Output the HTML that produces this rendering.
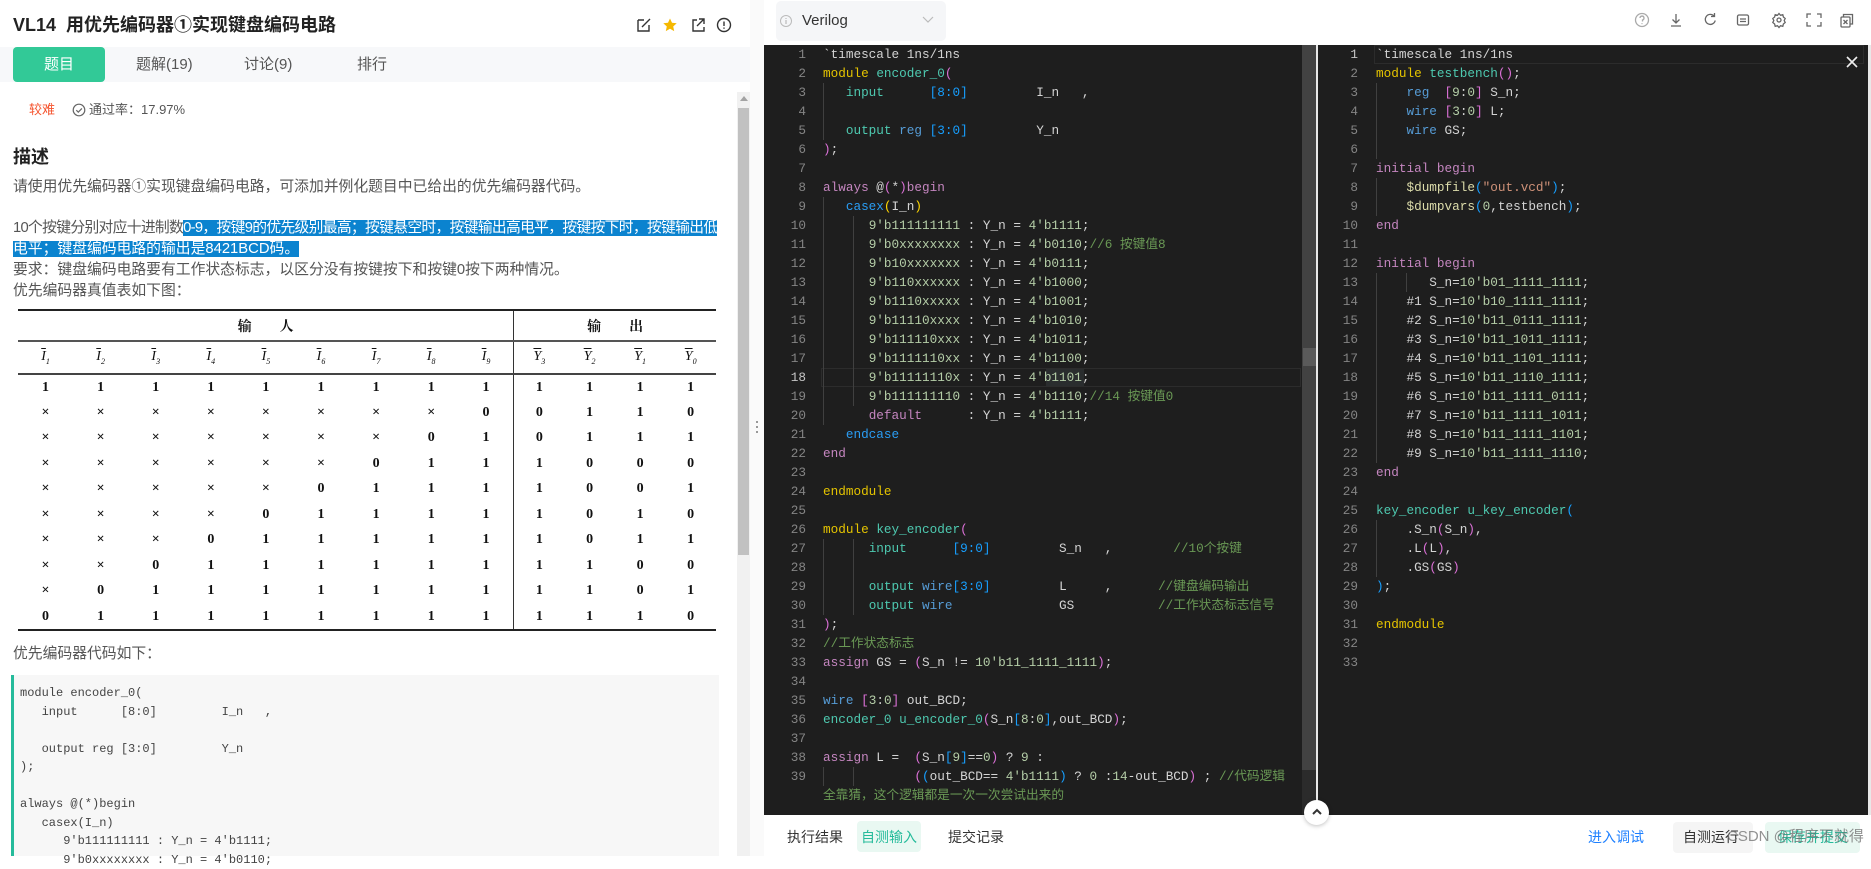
<!DOCTYPE html>
<html><head><meta charset="utf-8">
<style>
*{margin:0;padding:0;box-sizing:border-box}
body{width:1871px;height:856px;overflow:hidden;background:#fff;position:relative;font-family:"Liberation Sans","Noto Sans CJK SC",sans-serif;color:#333}
.a{position:absolute;white-space:pre}
.cn{font-family:"Liberation Sans","Noto Sans CJK SC",sans-serif}
.code{font-family:"Liberation Mono","Noto Sans CJK SC",monospace;font-size:12.7px;line-height:19px;color:#d4d4d4}
.ln{position:absolute;white-space:pre;width:40px;text-align:right;color:#858585;font-family:"Liberation Mono",monospace;font-size:12.7px;line-height:19px}
.y{color:#e5c400}.t{color:#4ec9b0}.b{color:#569cd6}.k{color:#2a9df4}.p{color:#c586c0}.n{color:#b5cea8}.c{color:#6a9955}.br{color:#179fff}.pk{color:#da70d6}.g{color:#ffd700}.f{color:#dcdcaa}.s{color:#ce9178}
.guide{position:absolute;width:1px;background:#404040}
table.tt{position:absolute;left:18px;top:309px;width:698px;border-collapse:collapse;font-family:"Liberation Serif",serif;font-weight:bold;font-size:14px;color:#111}
table.tt td{text-align:center;padding:0}
.hl{background:#0b83cf;color:#fff}
.para{font-size:14.8px;color:#555;line-height:21px}
</style></head><body>

<div class="a cn" style="left:13px;top:12px;font-size:18px;font-weight:bold;color:#222;line-height:26px">VL14  用优先编码器①实现键盘编码电路</div>
<svg class="a" style="left:636px;top:17px" width="100" height="16" viewBox="0 0 100 16">
 <g fill="none" stroke="#333" stroke-width="1.4">
  <path d="M2 3h6M2 3v11h11v-6M6 10l8-8"/>
  <path d="M61 3h-4v11h11v-4M63 2h5v5M68 2l-7 7"/>
  <circle cx="88" cy="8" r="6.5"/><path d="M88 4.5v4.5M88 10.5v1.2"/>
 </g>
 <path d="M34 1.5l2 4.3 4.7.5-3.5 3.2 1 4.6-4.2-2.4-4.2 2.4 1-4.6-3.5-3.2 4.7-.5z" fill="#f5b800"/>
</svg>
<div class="a" style="left:0;top:47px;width:750px;height:35px;background:#f7f8fa"></div>
<div class="a" style="left:13px;top:47px;width:92px;height:35px;background:#32c997;border-radius:4px"></div>
<div class="a cn" style="left:13px;top:47px;width:92px;text-align:center;line-height:35px;font-size:15px;color:#fff">题目</div>
<div class="a cn" style="left:136px;top:47px;line-height:35px;font-size:15px;color:#555">题解(19)</div>
<div class="a cn" style="left:244px;top:47px;line-height:35px;font-size:15px;color:#555">讨论(9)</div>
<div class="a cn" style="left:357px;top:47px;line-height:35px;font-size:15px;color:#555">排行</div>

<div class="a cn" style="left:29px;top:101px;font-size:13px;color:#f5532d;line-height:18px">较难</div>
<svg class="a" style="left:72px;top:103px" width="14" height="14"><circle cx="7" cy="7" r="5.8" fill="none" stroke="#666" stroke-width="1.2"/><path d="M4.3 7.2l2 2 3.6-3.8" fill="none" stroke="#666" stroke-width="1.2"/></svg>
<div class="a cn" style="left:89px;top:101px;font-size:13px;color:#555;line-height:18px">通过率：17.97%</div>

<div class="a cn" style="left:13px;top:145px;font-size:18px;font-weight:bold;color:#222;line-height:24px">描述</div>
<div class="a cn para" style="left:13px;top:177px">请使用优先编码器①实现键盘编码电路，可添加并例化题目中已给出的优先编码器代码。</div>
<div class="a cn para" style="left:13px;top:218px;letter-spacing:-0.7px">10个按键分别对应十进制数<span class="hl">0-9，按键9的优先级别最高；按键悬空时，按键输出高电平，按键按下时，按键输出低</span></div>
<div class="a cn para" style="left:13px;top:239px"><span class="hl">电平；键盘编码电路的输出是8421BCD码。</span></div>
<div class="a cn para" style="left:13px;top:260px">要求：键盘编码电路要有工作状态标志，以区分没有按键按下和按键0按下两种情况。</div>
<div class="a cn para" style="left:13px;top:281px">优先编码器真值表如下图：</div>

<table class="tt">
<colgroup><col span="9" style="width:55.1px"><col span="4" style="width:50.5px"></colgroup>
<tr style="height:31px;border-top:2px solid #222;border-bottom:2px solid #555"><td colspan="9" style="font-family:'Noto Serif CJK SC',serif;font-size:14px">输&emsp;&emsp;人</td><td colspan="4" style="border-left:1.5px solid #333;font-family:'Noto Serif CJK SC',serif;font-size:14px">输&emsp;&emsp;出</td></tr>
<tr style="height:33px;border-bottom:2px solid #444;font-style:italic;font-weight:normal"><td><span style="text-decoration:overline">I</span><sub style="font-size:8px">1</sub></td><td><span style="text-decoration:overline">I</span><sub style="font-size:8px">2</sub></td><td><span style="text-decoration:overline">I</span><sub style="font-size:8px">3</sub></td><td><span style="text-decoration:overline">I</span><sub style="font-size:8px">4</sub></td><td><span style="text-decoration:overline">I</span><sub style="font-size:8px">5</sub></td><td><span style="text-decoration:overline">I</span><sub style="font-size:8px">6</sub></td><td><span style="text-decoration:overline">I</span><sub style="font-size:8px">7</sub></td><td><span style="text-decoration:overline">I</span><sub style="font-size:8px">8</sub></td><td><span style="text-decoration:overline">I</span><sub style="font-size:8px">9</sub></td><td style="border-left:1.5px solid #333"><span style="text-decoration:overline">Y</span><sub style="font-size:8px">3</sub></td><td><span style="text-decoration:overline">Y</span><sub style="font-size:8px">2</sub></td><td><span style="text-decoration:overline">Y</span><sub style="font-size:8px">1</sub></td><td><span style="text-decoration:overline">Y</span><sub style="font-size:8px">0</sub></td></tr>
<tr style="height:26px"><td>1</td><td>1</td><td>1</td><td>1</td><td>1</td><td>1</td><td>1</td><td>1</td><td>1</td><td style="border-left:1.5px solid #333">1</td><td>1</td><td>1</td><td>1</td></tr>
<tr style="height:25.5px"><td>×</td><td>×</td><td>×</td><td>×</td><td>×</td><td>×</td><td>×</td><td>×</td><td>0</td><td style="border-left:1.5px solid #333">0</td><td>1</td><td>1</td><td>0</td></tr>
<tr style="height:25.5px"><td>×</td><td>×</td><td>×</td><td>×</td><td>×</td><td>×</td><td>×</td><td>0</td><td>1</td><td style="border-left:1.5px solid #333">0</td><td>1</td><td>1</td><td>1</td></tr>
<tr style="height:25.5px"><td>×</td><td>×</td><td>×</td><td>×</td><td>×</td><td>×</td><td>0</td><td>1</td><td>1</td><td style="border-left:1.5px solid #333">1</td><td>0</td><td>0</td><td>0</td></tr>
<tr style="height:25.5px"><td>×</td><td>×</td><td>×</td><td>×</td><td>×</td><td>0</td><td>1</td><td>1</td><td>1</td><td style="border-left:1.5px solid #333">1</td><td>0</td><td>0</td><td>1</td></tr>
<tr style="height:25.5px"><td>×</td><td>×</td><td>×</td><td>×</td><td>0</td><td>1</td><td>1</td><td>1</td><td>1</td><td style="border-left:1.5px solid #333">1</td><td>0</td><td>1</td><td>0</td></tr>
<tr style="height:25.5px"><td>×</td><td>×</td><td>×</td><td>0</td><td>1</td><td>1</td><td>1</td><td>1</td><td>1</td><td style="border-left:1.5px solid #333">1</td><td>0</td><td>1</td><td>1</td></tr>
<tr style="height:25.5px"><td>×</td><td>×</td><td>0</td><td>1</td><td>1</td><td>1</td><td>1</td><td>1</td><td>1</td><td style="border-left:1.5px solid #333">1</td><td>1</td><td>0</td><td>0</td></tr>
<tr style="height:25.5px"><td>×</td><td>0</td><td>1</td><td>1</td><td>1</td><td>1</td><td>1</td><td>1</td><td>1</td><td style="border-left:1.5px solid #333">1</td><td>1</td><td>0</td><td>1</td></tr>
<tr style="height:26px;border-bottom:2px solid #222"><td>0</td><td>1</td><td>1</td><td>1</td><td>1</td><td>1</td><td>1</td><td>1</td><td>1</td><td style="border-left:1.5px solid #333">1</td><td>1</td><td>1</td><td>0</td></tr>
</table>

<div class="a cn para" style="left:13px;top:644px">优先编码器代码如下：</div>
<div class="a" style="left:11px;top:675px;width:708px;height:181px;background:#f7f7f7;border-left:3px solid #25bb9b"></div>
<div class="a" style="left:20px;top:684px;font-family:'Liberation Mono',monospace;font-size:12px;line-height:18.5px;color:#444">module encoder_0(
   input      [8:0]         I_n   ,

   output reg [3:0]         Y_n
);

always @(*)begin
   casex(I_n)
      9'b111111111 : Y_n = 4'b1111;
      9'b0xxxxxxxx : Y_n = 4'b0110;</div>

<div class="a" style="left:737px;top:92px;width:13px;height:764px;background:#f1f1f1"></div>
<div class="a" style="left:740px;top:96px;width:0;height:0;border-left:4px solid transparent;border-right:4px solid transparent;border-bottom:5px solid #a3a3a3"></div>
<div class="a" style="left:738px;top:108px;width:11px;height:447px;background:#c1c1c1"></div>
<div class="a" style="left:750px;top:0;width:14px;height:856px;background:#fafafa"></div>
<div class="a" style="left:756px;top:421px;width:2px;height:2px;background:#999;box-shadow:0 5px #999,0 10px #999"></div>

<div class="a" style="left:776px;top:1px;width:170px;height:40px;background:#f5f6f8;border-radius:5px"></div>
<svg class="a" style="left:779px;top:14px" width="14" height="14"><circle cx="7" cy="7" r="5.5" fill="none" stroke="#bbb" stroke-width="1"/><path d="M7 6v4M7 4v1" stroke="#bbb" stroke-width="1.2"/></svg>
<div class="a" style="left:802px;top:10px;font-size:15px;color:#333;line-height:22px">Verilog</div>
<svg class="a" style="left:922px;top:16px" width="12" height="8"><path d="M1 1l5 5 5-5" fill="none" stroke="#bbb" stroke-width="1.2"/></svg>

<svg class="a" style="left:1630px;top:10px" width="230" height="22" viewBox="0 0 230 22">
 <g fill="none" stroke="#666" stroke-width="1.3">
  <circle cx="12" cy="10" r="6.5" stroke="#aaa"/><path d="M10 8a2 2 0 1 1 2.5 2v1.5M12 13.3v.8" stroke="#aaa"/>
  <path d="M46 4v9M42.5 9.5l3.5 3.5 3.5-3.5M41 16h10"/>
  <path d="M84 6a5 5 0 1 0 1.2 4.5M84.5 3v3.5h-3.5"/>
  <rect x="107.5" y="5" width="11" height="10" rx="1.5"/><path d="M110 9h6M110 11.5h6"/>
  <circle cx="149" cy="10" r="2"/><path d="M149 3.5l1.5 1.8 2.3-.6.6 2.3 1.8 1.5-1 2 1 2-1.8 1.5-.6 2.3-2.3-.6-1.5 1.8-1.5-1.8-2.3.6-.6-2.3-1.8-1.5 1-2-1-2 1.8-1.5.6-2.3 2.3.6z"/>
  <path d="M177 8V4h4M187 4h4v4M191 12v4h-4M181 16h-4v-4"/>
  <rect x="211" y="7" width="9" height="10" rx="1"/><path d="M213.5 7V4.5h9v9.5H220M213.5 10l4 4M217.5 10l-4 4"/>
 </g>
</svg>

<div class="a" style="left:764px;top:45px;width:1107px;height:770px;background:#1e1e1e"></div>
<div class="a" style="left:1302px;top:45px;width:14px;height:725px;background:#424242"></div>
<div class="a" style="left:1302px;top:770px;width:14px;height:45px;background:#2b2b2b"></div>
<div class="a" style="left:1303px;top:348px;width:13px;height:18px;background:#5a5a5a"></div>
<div class="a" style="left:1316px;top:45px;width:2px;height:770px;background:#e8e8e8"></div>
<div class="a" style="left:1868px;top:45px;width:3px;height:770px;background:#e8e8e8"></div>
<div class="a" style="left:821px;top:368px;width:480px;height:19px;border:1px solid #2c2c2c"></div>
<div class="a" style="left:1374px;top:45px;width:490px;height:19px;border:1px solid #2c2c2c"></div>
<div class="a" style="left:1046px;top:369px;width:38px;height:17px;background:#2a2d2e"></div>

<div class="guide" style="left:823px;top:83px;height:57px"></div>
<div class="guide" style="left:823px;top:197px;height:228px"></div>
<div class="guide" style="left:853px;top:216px;height:190px"></div>
<div class="guide" style="left:823px;top:539px;height:76px"></div>
<div class="guide" style="left:853px;top:539px;height:76px"></div>
<div class="guide" style="left:823px;top:767px;height:19px"></div>
<div class="guide" style="left:853px;top:767px;height:19px"></div>
<div class="guide" style="left:1376px;top:83px;height:76px"></div>
<div class="guide" style="left:1376px;top:178px;height:38px"></div>
<div class="guide" style="left:1376px;top:273px;height:190px"></div>
<div class="guide" style="left:1406px;top:273px;height:19px"></div>
<div class="guide" style="left:1376px;top:520px;height:57px"></div>

<div class="ln" style="left:766px;top:45px">1
2
3
4
5
6
7
8
9
10
11
12
13
14
15
16
17
<span style="color:#c6c6c6">18</span>
19
20
21
22
23
24
25
26
27
28
29
30
31
32
33
34
35
36
37
38
39</div>

<div class="a code" style="left:823px;top:45px">`timescale 1ns/1ns
<span class="y">module</span> <span class="t">encoder_0</span><span class="pk">(</span>
   <span class="t">input</span>      <span class="br">[8:0]</span>         I_n   ,

   <span class="t">output</span> <span class="b">reg</span> <span class="br">[3:0]</span>         Y_n
<span class="pk">)</span>;

<span class="p">always</span> @<span class="pk">(</span>*<span class="pk">)</span><span class="p">begin</span>
   <span class="k">casex</span><span class="g">(</span>I_n<span class="g">)</span>
      <span class="n">9'b111111111</span> : Y_n = <span class="n">4'b1111</span>;
      <span class="n">9'b0xxxxxxxx</span> : Y_n = <span class="n">4'b0110</span>;<span class="c">//6 按键值8</span>
      <span class="n">9'b10xxxxxxx</span> : Y_n = <span class="n">4'b0111</span>;
      <span class="n">9'b110xxxxxx</span> : Y_n = <span class="n">4'b1000</span>;
      <span class="n">9'b1110xxxxx</span> : Y_n = <span class="n">4'b1001</span>;
      <span class="n">9'b11110xxxx</span> : Y_n = <span class="n">4'b1010</span>;
      <span class="n">9'b111110xxx</span> : Y_n = <span class="n">4'b1011</span>;
      <span class="n">9'b1111110xx</span> : Y_n = <span class="n">4'b1100</span>;
      <span class="n">9'b11111110x</span> : Y_n = <span class="n">4'b1101</span>;
      <span class="n">9'b111111110</span> : Y_n = <span class="n">4'b1110</span>;<span class="c">//14 按键值0</span>
      <span class="p">default</span>      : Y_n = <span class="n">4'b1111</span>;
   <span class="k">endcase</span>
<span class="p">end</span>

<span class="y">endmodule</span>

<span class="y">module</span> <span class="t">key_encoder</span><span class="pk">(</span>
      <span class="t">input</span>      <span class="br">[9:0]</span>         S_n   ,        <span class="c">//10个按键</span>

      <span class="t">output</span> <span class="b">wire</span><span class="br">[3:0]</span>         L     ,      <span class="c">//键盘编码输出</span>
      <span class="t">output</span> <span class="b">wire</span>              GS           <span class="c">//工作状态标志信号</span>
<span class="pk">)</span>;
<span class="c">//工作状态标志</span>
<span class="p">assign</span> GS = <span class="pk">(</span>S_n != <span class="n">10'b11_1111_1111</span><span class="pk">)</span>;

<span class="b">wire</span> <span class="pk">[</span><span class="n">3</span>:<span class="n">0</span><span class="pk">]</span> out_BCD;
<span class="t">encoder_0</span> <span class="t">u_encoder_0</span><span class="pk">(</span>S_n<span class="br">[</span><span class="n">8</span>:<span class="n">0</span><span class="br">]</span>,out_BCD<span class="pk">)</span>;

<span class="p">assign</span> L =  <span class="pk">(</span>S_n<span class="br">[</span><span class="n">9</span><span class="br">]</span>==<span class="n">0</span><span class="pk">)</span> ? <span class="n">9</span> :
            <span class="pk">(</span><span class="br">(</span>out_BCD== <span class="n">4'b1111</span><span class="br">)</span> ? <span class="n">0</span> :<span class="n">14</span>-out_BCD<span class="pk">)</span> ; <span class="c">//代码逻辑</span>
<span class="c">全靠猜，这个逻辑都是一次一次尝试出来的</span></div>

<div class="ln" style="left:1318px;top:45px"><span style="color:#c6c6c6">1</span>
2
3
4
5
6
7
8
9
10
11
12
13
14
15
16
17
18
19
20
21
22
23
24
25
26
27
28
29
30
31
32
33</div>

<div class="a code" style="left:1376px;top:45px">`timescale 1ns/1ns
<span class="y">module</span> <span class="t">testbench</span><span class="pk">()</span>;
    <span class="b">reg</span>  <span class="pk">[</span><span class="n">9</span>:<span class="n">0</span><span class="pk">]</span> S_n;
    <span class="b">wire</span> <span class="pk">[</span><span class="n">3</span>:<span class="n">0</span><span class="pk">]</span> L;
    <span class="b">wire</span> GS;

<span class="p">initial</span> <span class="p">begin</span>
    <span class="f">$dumpfile</span><span class="br">(</span><span class="s">"out.vcd"</span><span class="br">)</span>;
    <span class="f">$dumpvars</span><span class="br">(</span><span class="n">0</span>,testbench<span class="br">)</span>;
<span class="p">end</span>

<span class="p">initial</span> <span class="p">begin</span>
       S_n=<span class="n">10'b01_1111_1111</span>;
    #1 S_n=<span class="n">10'b10_1111_1111</span>;
    #2 S_n=<span class="n">10'b11_0111_1111</span>;
    #3 S_n=<span class="n">10'b11_1011_1111</span>;
    #4 S_n=<span class="n">10'b11_1101_1111</span>;
    #5 S_n=<span class="n">10'b11_1110_1111</span>;
    #6 S_n=<span class="n">10'b11_1111_0111</span>;
    #7 S_n=<span class="n">10'b11_1111_1011</span>;
    #8 S_n=<span class="n">10'b11_1111_1101</span>;
    #9 S_n=<span class="n">10'b11_1111_1110</span>;
<span class="p">end</span>

<span class="t">key_encoder</span> <span class="t">u_key_encoder</span><span class="br">(</span>
    .S_n<span class="pk">(</span>S_n<span class="pk">)</span>,
    .L<span class="pk">(</span>L<span class="pk">)</span>,
    .GS<span class="pk">(</span>GS<span class="pk">)</span>
<span class="br">)</span>;

<span class="y">endmodule</span>
</div>

<svg class="a" style="left:1845px;top:55px" width="14" height="14"><path d="M2 2l10 10M12 2L2 12" stroke="#eee" stroke-width="1.6"/></svg>

<div class="a" style="left:1304px;top:800px;width:25px;height:25px;border-radius:50%;background:#fff;box-shadow:0 1px 4px rgba(0,0,0,.25)"></div>
<svg class="a" style="left:1311px;top:807px" width="12" height="10"><path d="M2 7l4-4 4 4" fill="none" stroke="#333" stroke-width="2"/></svg>

<div class="a cn" style="left:787px;top:827px;font-size:14px;color:#333;line-height:20px">执行结果</div>
<div class="a" style="left:857px;top:821px;width:64px;height:31px;background:#e9f8f2;border-radius:4px"></div>
<div class="a cn" style="left:857px;top:827px;width:64px;text-align:center;font-size:14px;color:#25bb9b;line-height:20px">自测输入</div>
<div class="a cn" style="left:948px;top:827px;font-size:14px;color:#333;line-height:20px">提交记录</div>
<div class="a cn" style="left:1588px;top:827px;font-size:14px;color:#1e80ff;line-height:20px">进入调试</div>
<div class="a" style="left:1673px;top:822px;width:80px;height:31px;background:#f5f5f5;border-radius:4px"></div>
<div class="a cn" style="left:1683px;top:827px;font-size:14px;color:#333;line-height:20px">自测运行</div>
<div class="a" style="left:1765px;top:822px;width:95px;height:31px;background:#e9f8f2;border-radius:4px"></div>
<div class="a cn" style="left:1778px;top:827px;font-size:14px;color:#25bb9b;line-height:20px">保存并提交</div>
<div class="a cn" style="left:1727px;top:826px;font-size:15px;color:rgba(110,110,110,.75);line-height:22px">CSDN @程序不就得</div>
</body></html>
